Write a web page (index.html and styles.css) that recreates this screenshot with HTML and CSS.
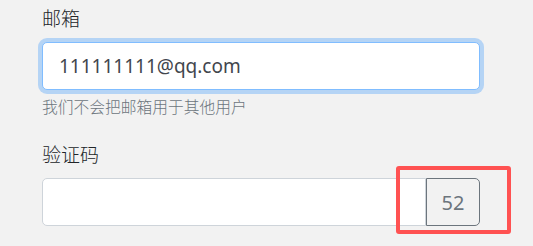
FILE: index.html
```html
<!DOCTYPE html>
<html lang="zh">
<head>
<meta charset="utf-8">
<title>表单</title>
<link rel="stylesheet" href="styles.css">
</head>
<body>
<form class="form">
  <div class="group group-email">
    <label class="label" for="email">邮箱</label>
    <input class="control control-focus" id="email" type="text" value="111111111@qq.com">
    <small class="help">我们不会把邮箱用于其他用户</small>
  </div>
  <div class="group">
    <label class="label" for="code">验证码</label>
    <div class="input-group">
      <input class="control control-left" id="code" type="text">
      <span class="addon">52</span>
    </div>
  </div>
</form>
<div class="highlight"></div>
</body>
</html>
```

FILE: styles.css
```css
* { box-sizing: border-box; }
html, body {
  margin: 0;
  padding: 0;
  background: #f2f2f2;
  font-family: "Noto Sans", "Noto Sans CJK SC", sans-serif;
  color: #212529;
}
body {
  position: relative;
  min-height: 246px;
}
.form {
  padding: 5px 53px 0 42px;
}
.group {
  display: flex;
  flex-direction: column;
}
.group-email {
  margin-bottom: 22px;
}
.label {
  font-size: 19px;
  font-weight: 300;
  line-height: 28px;
  margin-bottom: 9px;
}
.control {
  display: block;
  width: 100%;
  height: 48px;
  padding: 8px 16px;
  font-family: inherit;
  font-size: 19px;
  line-height: 30px;
  color: #41464d;
  background: #fff;
  border: 1px solid #ced4da;
  border-radius: 5px;
  outline: none;
}
.control-focus {
  border-color: #80bdff;
  box-shadow: 0 0 0 4px rgba(0, 123, 255, 0.25);
}
.help {
  margin-top: 6px;
  font-size: 15.75px;
  font-weight: 300;
  line-height: 23px;
  color: #6c757d;
}
.input-group {
  display: flex;
  height: 48px;
}
.control-left {
  flex: 1;
  width: auto;
  min-width: 0;
  border-radius: 5px 0 0 5px;
}
.addon {
  display: flex;
  align-items: center;
  justify-content: center;
  width: 54px;
  height: 48px;
  font-size: 20px;
  color: #6c757d;
  background: #f2f2f2;
  border: 1px solid #6c757d;
  border-radius: 0 5px 5px 0;
}
.highlight {
  position: absolute;
  left: 396px;
  top: 166px;
  width: 115px;
  height: 68px;
  border: 4px solid #ff5252;
  border-radius: 3px;
  pointer-events: none;
}
```
